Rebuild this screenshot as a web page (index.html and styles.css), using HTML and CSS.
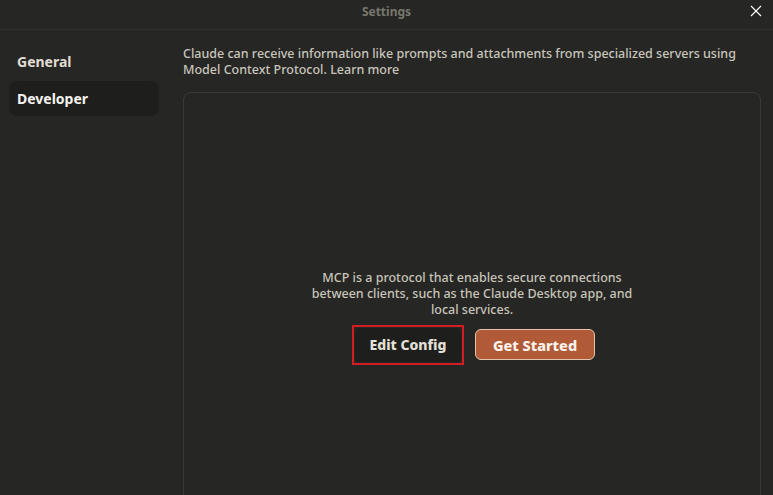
FILE: index.html
```
<!DOCTYPE html>
<html lang="en">
<head>
    <meta charset="UTF-8">
    <meta name="viewport" content="width=device-width, initial-scale=1.0">
    <title>Settings</title>
    <link rel="stylesheet" href="styles.css">
</head>
<body>

    <header class="titlebar">
        <div class="title">Settings</div>
        <button class="close" aria-label="Close">
            <svg width="12" height="12" viewBox="0 0 12 12">
                <path d="M1 1 L11 11 M11 1 L1 11" stroke="#ffffff" stroke-width="1.1" fill="none"/>
            </svg>
        </button>
    </header>

    <div class="layout">
        <aside class="sidebar">
            <a class="nav-item" href="#">General</a>
            <a class="nav-item active" href="#">Developer</a>
        </aside>

        <main class="content">
            <p class="intro">Claude can receive information like prompts and attachments from specialized servers using Model Context Protocol. <a href="#">Learn more</a></p>

            <section class="mcp-box">
                <p class="mcp-text">MCP is a protocol that enables secure connections between clients, such as the Claude Desktop app, and local services.</p>
                <div class="actions">
                    <span class="highlight">
                        <button class="btn btn-dark">Edit Config</button>
                    </span>
                    <button class="btn btn-primary">Get Started</button>
                </div>
            </section>
        </main>
    </div>

</body>
</html>
```

FILE: styles.css
```
* {
    margin: 0;
    padding: 0;
    box-sizing: border-box;
}

html, body {
    height: 100%;
    overflow: hidden;
}

body {
    font-family: "Noto Sans", "Liberation Sans", sans-serif;
    background-color: #262624;
    color: #c3c0b6;
}

.titlebar {
    height: 30px;
    border-bottom: 1px solid #2f2f2d;
    display: flex;
    align-items: center;
    justify-content: center;
    position: relative;
}

.titlebar .title {
    font-size: 12px;
    font-weight: bold;
    color: #77776f;
    margin-top: -6px;
}

.titlebar .close {
    position: absolute;
    right: 11px;
    top: 5px;
    background: none;
    border: none;
    width: 12px;
    height: 12px;
    cursor: pointer;
}

.layout {
    display: flex;
    padding-top: 14px;
}

.sidebar {
    width: 183px;
    padding-left: 9px;
    padding-right: 24px;
    display: flex;
    flex-direction: column;
    gap: 2px;
}

.nav-item {
    display: block;
    height: 35px;
    line-height: 35px;
    padding-left: 8px;
    border-radius: 8px;
    color: #e0ddd5;
    font-size: 14px;
    font-weight: bold;
    text-decoration: none;
}

.nav-item.active {
    background-color: #1e1e1d;
    color: #f5f3ee;
}

.content {
    width: 578px;
}

.intro {
    font-size: 12.5px;
    font-weight: 500;
    line-height: 16px;
    color: #c8c5bc;
    padding-top: 2px;
}

.intro a {
    color: #c8c5bc;
    text-decoration: none;
}

.mcp-box {
    margin-top: 14px;
    height: 450px;
    border: 1px solid #3a3937;
    border-radius: 8px;
    display: flex;
    flex-direction: column;
    align-items: center;
    justify-content: center;
}

.mcp-text {
    width: 330px;
    text-align: center;
    font-size: 12.5px;
    font-weight: 500;
    line-height: 16px;
    color: #c7c4ba;
}

.actions {
    display: flex;
    align-items: center;
    gap: 11px;
    margin-top: 7px;
    margin-left: 3px;
}

.highlight {
    display: block;
    border: 2px solid #d41c22;
    padding: 1px;
}

.btn {
    font-family: inherit;
    font-weight: 800;
    border-radius: 6px;
    cursor: pointer;
}

.btn-dark {
    width: 106px;
    height: 34px;
    font-size: 14px;
    background-color: #1e1e1d;
    color: #e3e0d8;
    border: none;
    border-radius: 4px;
}

.btn-primary {
    width: 120px;
    height: 31px;
    font-size: 14.5px;
    background-color: #b05a37;
    color: #faf3ec;
    border: 1px solid #e6c2aa;
}
```
